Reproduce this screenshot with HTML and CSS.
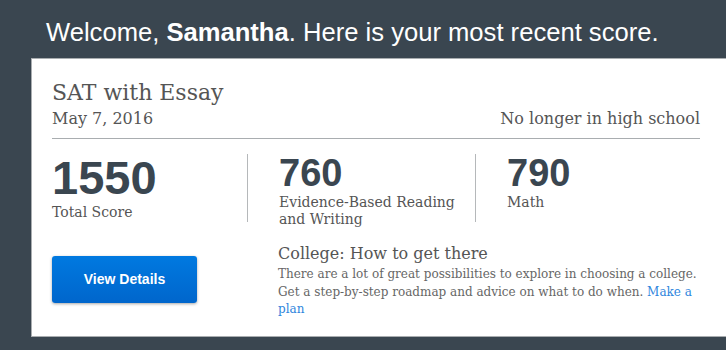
FILE: index.html
```html
<!DOCTYPE html>
<html>
<head>
<meta charset="utf-8">
<link rel="stylesheet" href="styles.css">
</head>
<body>
<h1 class="welcome">Welcome, <b>Samantha</b>. Here is your most recent score.</h1>
<div class="card">
  <div class="test-title">SAT with Essay</div>
  <div class="meta">
    <span class="date">May 7, 2016</span>
    <span class="status">No longer in high school</span>
  </div>
  <div class="scores">
    <div class="score first">
      <div class="num big">1550</div>
      <div class="label">Total Score</div>
    </div>
    <div class="score">
      <div class="num">760</div>
      <div class="label">Evidence-Based Reading and Writing</div>
    </div>
    <div class="score">
      <div class="num">790</div>
      <div class="label">Math</div>
    </div>
  </div>
  <div class="bottom">
    <div class="btn-col"><a class="btn" href="#">View Details</a></div>
    <div class="promo">
      <div class="promo-title">College: How to get there</div>
      <p class="promo-text">There are a lot of great possibilities to explore in choosing a college. Get a step-by-step roadmap and advice on what to do when. <a class="link" href="#">Make a plan</a></p>
    </div>
  </div>
</div>
</body>
</html>
```
FILE: styles.css
```css
html, body {
  margin: 0;
  padding: 0;
  background: #3a4650;
  overflow: hidden;
}
body {
  width: 726px;
  height: 350px;
}
.welcome {
  margin: 0;
  padding: 16px 0 0 46px;
  height: 42px;
  font-family: "Liberation Sans", Arial, sans-serif;
  font-weight: normal;
  font-size: 25.6px;
  line-height: 32px;
  color: #fff;
  white-space: nowrap;
}
.welcome b { font-weight: bold; }
.card {
  margin-left: 31px;
  width: 720px;
  box-sizing: border-box;
  background: #fff;
  border: 1px solid #a9adb0;
  border-right: none;
  padding: 20px 0 0 20px;
  height: 279px;
  font-family: "DejaVu Serif", serif;
  color: #555;
}
.test-title {
  font-size: 22px;
  line-height: 28px;
  color: #555;
}
.meta {
  width: 648px;
  display: flex;
  justify-content: space-between;
  align-items: baseline;
  font-size: 16px;
  line-height: 24px;
  padding-bottom: 7px;
  border-bottom: 1px solid #a9adb0;
}
.scores {
  width: 649px;
  display: flex;
  margin-top: 15px;
}
.score {
  width: 196px;
  flex: none;
  padding-left: 31px;
  height: 68px;
  border-left: 1px solid #b5b8ba;
}
.score.first {
  padding-left: 0;
  border-left: none;
  width: 195px;
}
.num {
  font-family: "Liberation Sans", Arial, sans-serif;
  font-weight: bold;
  font-size: 38px;
  line-height: 38px;
  color: #3a4650;
}
.num.big {
  font-size: 47px;
  line-height: 48px;
}
.label {
  font-size: 14px;
  line-height: 17px;
  color: #555;
  margin-top: 2px;
}
.bottom {
  display: flex;
  width: 649px;
  margin-top: 22px;
}
.btn-col {
  width: 226px;
  flex: none;
  padding-top: 12px;
}
.btn {
  display: block;
  width: 145px;
  height: 47px;
  line-height: 47px;
  text-align: center;
  border-radius: 3px;
  background: linear-gradient(#0079e0, #0066cc);
  box-shadow: 0 1px 3px rgba(0,0,0,0.35);
  color: #fff;
  font-family: "Liberation Sans", Arial, sans-serif;
  font-weight: bold;
  font-size: 14px;
  text-decoration: none;
}
.promo { flex: 1; }
.promo-title {
  font-size: 16px;
  line-height: 20px;
  color: #555;
}
.promo-text {
  margin: 2px 0 0;
  font-size: 12px;
  line-height: 17.5px;
  color: #666;
}
.link {
  color: #2f86dd;
  text-decoration: none;
}
```
